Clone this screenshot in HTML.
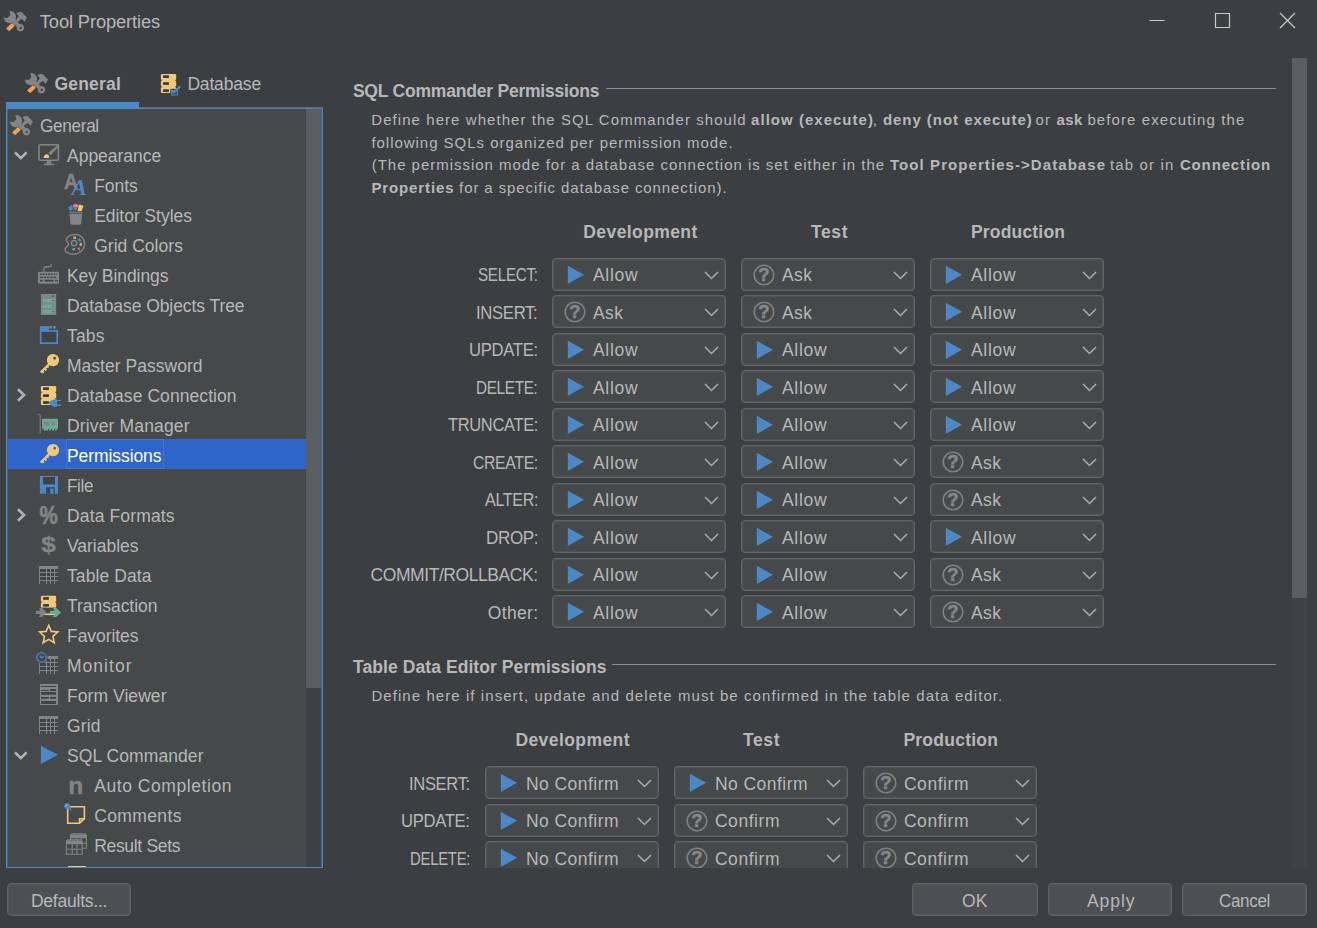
<!DOCTYPE html>
<html lang="en"><head><meta charset="utf-8"><title>Tool Properties</title>
<style>
*{box-sizing:border-box;margin:0;padding:0}
html,body{width:1317px;height:928px;overflow:hidden;background:#3c3f41}
body{position:relative;font-family:"Liberation Sans",sans-serif;color:#b8b8b8;font-size:17.5px}
.a{position:absolute;white-space:pre}
.t{line-height:30px;height:30px}
.b{font-weight:bold}
svg{position:absolute;overflow:visible}
#tree{position:absolute;left:6px;top:107px;width:317px;height:761px;background:#45494a;border:1px solid #4a88c7;border-top-color:#67696a;overflow:hidden}
.row{position:absolute;left:0;width:300px;height:30px}
.sel{position:absolute;left:1px;top:331px;width:298px;height:30px;background:#2f65ca}
.focus{position:absolute;left:59px;top:331px;width:98px;height:30px;border:1px solid #4672c8}
.cb{position:absolute;width:174px;height:33px;background:#45494a;border:1px solid #626567;border-radius:4px;box-shadow:inset 0 0 0 1px rgba(100,103,105,0.4)}
.x{line-height:31px}
.lbl{line-height:33px;height:33px}
.hd{font-weight:bold;line-height:24px}
.btn{position:absolute;height:33px;top:883px;background:#4c5052;border:1px solid #5f6163;border-radius:4px;box-shadow:inset 0 0 0 1px rgba(95,97,99,0.4)}
.bt{line-height:31px}
.sec{font-weight:bold;line-height:24px}
.ln{position:absolute;height:1px;background:#8b8d8e}
.d{font-size:15px;line-height:22px}
#view{position:absolute;left:340px;top:58px;width:952px;height:809.5px;overflow:hidden}
#view>div{position:absolute;left:-340px;top:-58px;width:1317px;height:928px}
</style></head>
<body>
<!-- title bar -->
<svg style="left:2.7px;top:9px" width="24" height="24" viewBox="0 0 24 24"><path d="M16.6 9.3L10.6 15.3" stroke="#828485" stroke-width="3" fill="none"/><path d="M8.8 14.9L10.9 16.8L6.2 21.3L4 19.4z" stroke="#f2a253" stroke-width="1.300" stroke-linejoin="round" fill="#f2a253"/><path d="M13.4 4.2L16.6 2.7L18.9 3.3L23.9 8.6L21.7 12.8L18.9 10L15.6 11.5L13.9 9.7L15.9 7.2z" fill="#828485"/><path d="M8.2 9.4L17.2 18.4" stroke="#828485" stroke-width="3.9" fill="none"/><path d="M17.4 14.9a3.8 3.8 0 1 0 0.01 0zM17.5 17.3a1.4 1.4 0 1 1 -0.01 0z" fill="#828485" fill-rule="evenodd"/><path d="M6.4 1.9A6.2 6.2 0 1 1 0.7 8.6L4.6 8.9L7.3 6.2z" fill="#828485"/></svg><div class="a " style="left:39.8px;top:7.5px;letter-spacing:-0.11px;line-height:28px;font-size:18.3px">Tool Properties</div>
<svg style="left:1146px;top:11px" width="160" height="20" viewBox="0 0 160 20"><path d="M3.5 9.5h15M69.5 2.5h14v14h-14zM134 2l15 15M149 2l-15 15" fill="none" stroke="#c8c9ca" stroke-width="1.2"/></svg>
<!-- tabs -->
<svg style="left:24.1px;top:70.6px" width="24" height="24" viewBox="0 0 24 24"><path d="M16.6 9.3L10.6 15.3" stroke="#828485" stroke-width="3" fill="none"/><path d="M8.8 14.9L10.9 16.8L6.2 21.3L4 19.4z" stroke="#f2a253" stroke-width="1.300" stroke-linejoin="round" fill="#f2a253"/><path d="M13.4 4.2L16.6 2.7L18.9 3.3L23.9 8.6L21.7 12.8L18.9 10L15.6 11.5L13.9 9.7L15.9 7.2z" fill="#828485"/><path d="M8.2 9.4L17.2 18.4" stroke="#828485" stroke-width="3.9" fill="none"/><path d="M17.4 14.9a3.8 3.8 0 1 0 0.01 0zM17.5 17.3a1.4 1.4 0 1 1 -0.01 0z" fill="#828485" fill-rule="evenodd"/><path d="M6.4 1.9A6.2 6.2 0 1 1 0.7 8.6L4.6 8.9L7.3 6.2z" fill="#828485"/></svg><div class="a b" style="left:54.5px;top:69.5px;letter-spacing:0.19px;line-height:28px">General</div><svg style="left:157px;top:70.8px" width="24" height="24" viewBox="0 0 24 24"><rect x="3.900" y="2.9" width="15.300" height="6.200" rx="1.300" fill="#f0c878"/><rect x="3.900" y="9.4" width="15.300" height="6.200" rx="1.300" fill="#f0c878"/><rect x="3.900" y="15.9" width="15.300" height="6.200" rx="1.300" fill="#f0c878"/><rect x="5" y="5.9" width="13.100" height="13.0" fill="#f0c878"/><rect x="6.100" y="4.3" width="5.800" height="2.700" fill="#343c49"/><rect x="6.100" y="11.2" width="5.800" height="2.700" fill="#343c49"/><rect x="6.100" y="18.3" width="5.800" height="2.700" fill="#343c49"/><rect x="13.200" y="17.800" width="8.600" height="7.200" fill="#3c3f41"/><rect x="14.600" y="19.800" width="6" height="4.200" fill="none" stroke="#4a88c7" stroke-width="1.100"/><path d="M14 18.700l2.900 2.700l6.300-6" fill="none" stroke="#4a88c7" stroke-width="2.200"/></svg><div class="a " style="left:187.4px;top:69.5px;letter-spacing:-0.17px;line-height:28px">Database</div>
<div class="a" style="left:6px;top:102px;width:133px;height:7px;background:#4a88c7;z-index:3"></div>
<!-- tree -->
<div id="tree">
<div class="sel"></div><div class="focus"></div>
<div class="row" style="top:2px"><svg style="left:2px;top:3px" width="24" height="24" viewBox="0 0 24 24"><path d="M16.6 9.3L10.6 15.3" stroke="#828485" stroke-width="3" fill="none"/><path d="M8.8 14.9L10.9 16.8L6.2 21.3L4 19.4z" stroke="#f2a253" stroke-width="1.300" stroke-linejoin="round" fill="#f2a253"/><path d="M13.4 4.2L16.6 2.7L18.9 3.3L23.9 8.6L21.7 12.8L18.9 10L15.6 11.5L13.9 9.7L15.9 7.2z" fill="#828485"/><path d="M8.2 9.4L17.2 18.4" stroke="#828485" stroke-width="3.9" fill="none"/><path d="M17.4 14.9a3.8 3.8 0 1 0 0.01 0zM17.5 17.3a1.4 1.4 0 1 1 -0.01 0z" fill="#828485" fill-rule="evenodd"/><path d="M6.4 1.9A6.2 6.2 0 1 1 0.7 8.6L4.6 8.9L7.3 6.2z" fill="#828485"/></svg><div class="a t" style="left:32.8px;top:0.5px;letter-spacing:-0.35px;transform:scaleX(0.9840);transform-origin:0 0;">General</div></div>
<div class="row" style="top:32px"><svg style="left:0;top:0" width="30" height="30" viewBox="0 0 30 30"><path d="M8 12.3L13.8 18.2L19.6 12.3" fill="none" stroke="#b1b3b5" stroke-width="2.6"/></svg><svg style="left:30px;top:3px" width="24" height="24" viewBox="0 0 24 24"><rect x="2" y="1.7" width="19.4" height="15.5" rx="1.2" fill="none" stroke="#828485" stroke-width="1.6"/><path d="M9.6 18h4.6v2.7h2.8v1.5h-10.2v-1.5h2.8z" fill="#828485"/><path d="M21.5 1.2L22.5 2.2L14 12.3L11.3 10z" fill="#828485"/><path d="M6.6 14.9c0.2-2.6 2-3.9 3.6-3.7c1.5 0.4 2.2 2 1.9 3.7z" fill="#f0c878"/></svg><div class="a t" style="left:60.0px;top:0.5px;letter-spacing:-0.01px;">Appearance</div></div>
<div class="row" style="top:62px"><svg style="left:57px;top:3px" width="24" height="24" viewBox="0 0 24 24"><text x="0.1" y="15.8" font-family="Liberation Sans, sans-serif" font-weight="bold" font-size="22.6" textLength="14" lengthAdjust="spacingAndGlyphs" stroke="#828485" stroke-width="0.5" fill="#828485">A</text><text x="7.4" y="22.2" font-family="Liberation Serif, serif" font-style="italic" font-weight="bold" font-size="23" fill="#4a88c7">A</text></svg><div class="a t" style="left:87.2px;top:0.5px;letter-spacing:-0.02px;">Fonts</div></div>
<div class="row" style="top:92px"><svg style="left:57px;top:3px" width="24" height="24" viewBox="0 0 24 24"><path d="M4.3 4.2L7.6 2L9.2 6.6L5.6 8z" fill="#4a88c7"/><path d="M8.8 3.2c0-3 5.8-3 5.8 0v1.4h-5.8z" fill="#e8799c"/><path d="M15.2 1.4L19.6 2.8L17.6 8H13.6z" fill="#f0c878"/><path d="M9.6 5h3.6L11.4 8z" fill="#828485"/><rect x="5.1" y="8.7" width="13.4" height="1.1" fill="#828485"/><path d="M5.4 10.7h12.8l-1 9.6q-0.15 1.4-1.6 1.4h-7.6q-1.45 0-1.6-1.4z" fill="#828485"/></svg><div class="a t" style="left:87.2px;top:0.5px;letter-spacing:-0.04px;">Editor Styles</div></div>
<div class="row" style="top:122px"><svg style="left:57px;top:3px" width="24" height="24" viewBox="0 0 24 24"><path d="M11.6 1.6c5.4 0 9 3.8 9 9.2c0 6-5.200 10.400-11.400 10.400c-4.400 0-8.200-1.900-8.200-4.700c0-2.600 3.400-2.400 3.400-5.300c0-1.800-2.200-2.100-2.200-4.400c0-2.900 4.200-5.200 9.400-5.200z" fill="none" stroke="#828485" stroke-width="1.5"/><circle cx="10.1" cy="10.1" r="2.7" fill="none" stroke="#828485" stroke-width="1.5"/><rect x="9.200" y="3.500" width="2.900" height="2.400" fill="#f2a253"/><path d="M13.4 6.600l2.200-1.600l1.600 2.600l-1.200 1.800z" fill="#4a88c7"/><path d="M15 11.200l2.600-1.800v4z" fill="#f0c878"/><path d="M13.400 15.200l2.200-1.200v4z" fill="#e8799c"/><path d="M7.600 16l3.800-1.600l-1.400 4.200l-1-1.400z" fill="#6aab93"/></svg><div class="a t" style="left:87.2px;top:0.5px;letter-spacing:0.02px;">Grid Colors</div></div>
<div class="row" style="top:152px"><svg style="left:30px;top:3px" width="24" height="24" viewBox="0 0 24 24"><path d="M14.200 1v1.400c0 2.200-7.400 0.400-7.400 3v3.200" fill="none" stroke="#828485" stroke-width="1.300"/><rect x="0.900" y="8.800" width="21.100" height="11.900" rx="1.400" fill="#828485"/><path d="M3 11.300h17" stroke="#3f4345" stroke-width="1.500" stroke-dasharray="1.7 1"/><path d="M3 14.300h17" stroke="#3f4345" stroke-width="1.300" stroke-dasharray="2.600 0.800"/><path d="M3 17.600h2.800M7.300 17.600h9.200M18 17.600h2.800" stroke="#3f4345" stroke-width="1.600"/></svg><div class="a t" style="left:60.0px;top:0.5px;letter-spacing:-0.06px;">Key Bindings</div></div>
<div class="row" style="top:182px"><svg style="left:30px;top:3px" width="24" height="24" viewBox="0 0 24 24"><rect x="3.900" y="0.900" width="15.300" height="21.100" fill="#828485"/><rect x="5.800" y="5.900" width="11.500" height="3.500" fill="#6aab93"/><rect x="5.800" y="11.600" width="11.500" height="3.400" fill="#6aab93"/><rect x="5.800" y="17" width="11.500" height="3.300" fill="#6aab93"/><path d="M15 3.200h2M15.400 7.600h1.400M15.400 13.300h1.400M15.400 18.700h1.400" stroke="#3f4345" stroke-width="1"/></svg><div class="a t" style="left:60.0px;top:0.5px;letter-spacing:-0.07px;">Database Objects Tree</div></div>
<div class="row" style="top:212px"><svg style="left:30px;top:3px" width="24" height="24" viewBox="0 0 24 24"><rect x="3.700" y="7.900" width="16.500" height="12.300" fill="#3f4345" stroke="#4a88c7" stroke-width="1.700"/><rect x="2.900" y="3.100" width="9.100" height="5.400" fill="#4a88c7"/><rect x="12.300" y="3.100" width="2.500" height="2.500" fill="#828485"/><rect x="16" y="3.100" width="2.800" height="2.500" fill="#828485"/></svg><div class="a t" style="left:60.0px;top:0.5px;letter-spacing:0.18px;">Tabs</div></div>
<div class="row" style="top:242px"><svg style="left:30px;top:3px" width="24" height="24" viewBox="0 0 24 24"><path d="M12.600 10.400L3.600 19.400M5 18l1.800 1.800M7.600 15.400l1.800 1.800M10 13l1.600 1.600" stroke="#f0c878" stroke-width="2.100" fill="none"/><path d="M16 1a6.100 6.100 0 1 0 0.010 0zM17.600 3.800a1.400 1.400 0 1 1 -0.010 0z" fill="#f0c878" fill-rule="evenodd"/></svg><div class="a t" style="left:60.0px;top:0.5px;letter-spacing:0.02px;">Master Password</div></div>
<div class="row" style="top:272px"><svg style="left:0;top:0" width="30" height="30" viewBox="0 0 30 30"><path d="M10.9 9.3L17 15.05L10.9 20.8" fill="none" stroke="#b1b3b5" stroke-width="2.6"/></svg><svg style="left:30px;top:3px" width="24" height="24" viewBox="0 0 24 24"><rect x="3.900" y="2.9" width="15.300" height="6.200" rx="1.300" fill="#f0c878"/><rect x="3.900" y="9.4" width="15.300" height="6.200" rx="1.300" fill="#f0c878"/><rect x="3.900" y="15.9" width="15.300" height="6.200" rx="1.300" fill="#f0c878"/><rect x="5" y="5.9" width="13.100" height="13.0" fill="#f0c878"/><rect x="6.100" y="4.3" width="5.800" height="2.700" fill="#343c49"/><rect x="6.100" y="11.3" width="5.800" height="2.700" fill="#343c49"/><rect x="6.100" y="18.2" width="5.800" height="2.700" fill="#343c49"/><path d="M12 19.300L15.500 16.800L18 16.200H20.100V16.900H24.100V18.100H20.100V21.400H24.100V22.900H20.100V24.100H18L15.500 23.200L12 20.500z" fill="#4a88c7"/></svg><div class="a t" style="left:60.0px;top:0.5px;letter-spacing:0.07px;">Database Connection</div></div>
<div class="row" style="top:302px"><svg style="left:30px;top:3px" width="24" height="24" viewBox="0 0 24 24"><path d="M1.200 1.600h1.300q0.700 0 0.700 0.700v18.200" fill="none" stroke="#828485" stroke-width="1"/><path d="M5.100 5.800h15.900v10h-1.200v1.700h-1.700v-1.700h-1v1.700h-2v-1.700h-1v1.700h-2v-1.700h-1v1.700h-4.500v-1.700h-1.500z" fill="#6aab93"/><rect x="7.100" y="8.600" width="5" height="4.500" fill="#828485"/><rect x="14.500" y="8.600" width="3.500" height="3.800" fill="#828485"/></svg><div class="a t" style="left:60.0px;top:0.5px;letter-spacing:0.15px;">Driver Manager</div></div>
<div class="row" style="top:332px"><svg style="left:30px;top:3px" width="24" height="24" viewBox="0 0 24 24"><path d="M12.600 10.400L3.600 19.400M5 18l1.800 1.800M7.600 15.400l1.800 1.800M10 13l1.600 1.600" stroke="#f0c878" stroke-width="2.100" fill="none"/><path d="M16 1a6.100 6.100 0 1 0 0.010 0zM17.600 3.800a1.400 1.400 0 1 1 -0.010 0z" fill="#f0c878" fill-rule="evenodd"/></svg><div class="a t" style="left:60.0px;top:0.5px;letter-spacing:-0.08px;color:#ffffff">Permissions</div></div>
<div class="row" style="top:362px"><svg style="left:30px;top:3px" width="24" height="24" viewBox="0 0 24 24"><path d="M2.900 2.900h18.100v17.900h-18.100z" fill="#4a88c7"/><rect x="6.100" y="2.900" width="11.900" height="8.500" fill="#3f4345"/><rect x="6.100" y="3" width="11" height="0.900" fill="#828485"/><path d="M9.100 14.300h8.600v6.500h-1.200v-5.200h-3.400v5.200h-4z" fill="#3f4345"/></svg><div class="a t" style="left:60.0px;top:0.5px;letter-spacing:-0.35px;transform:scaleX(0.9759);transform-origin:0 0;">File</div></div>
<div class="row" style="top:392px"><svg style="left:0;top:0" width="30" height="30" viewBox="0 0 30 30"><path d="M10.9 9.3L17 15.05L10.9 20.8" fill="none" stroke="#b1b3b5" stroke-width="2.6"/></svg><svg style="left:30px;top:3px" width="24" height="24" viewBox="0 0 24 24"><text x="2.500" y="21" font-family="Liberation Sans, sans-serif" font-weight="bold" font-size="25" textLength="18.200" lengthAdjust="spacingAndGlyphs" stroke="#828485" stroke-width="0.7" fill="#828485">%</text></svg><div class="a t" style="left:60.0px;top:0.5px;letter-spacing:0.14px;">Data Formats</div></div>
<div class="row" style="top:422px"><svg style="left:30px;top:3px" width="24" height="24" viewBox="0 0 24 24"><text x="4.200" y="18.800" font-family="Liberation Sans, sans-serif" font-weight="bold" font-size="22.500" textLength="14.600" lengthAdjust="spacingAndGlyphs" stroke="#828485" stroke-width="0.4" fill="#828485">$</text></svg><div class="a t" style="left:60.0px;top:0.5px;letter-spacing:-0.02px;">Variables</div></div>
<div class="row" style="top:452px"><svg style="left:30px;top:3px" width="24" height="24" viewBox="0 0 24 24"><rect x="2.500" y="6" width="18.500" height="12" fill="#3f4345"/><rect x="1.900" y="3" width="19.200" height="3" fill="#828485"/><path d="M2.500 5v16M9.500 5v16M13.500 5v16M17.500 5v16M2 9.500h19.100M2 13.500h19.100M2 17.500h19.100" stroke="#828485" stroke-width="1"/></svg><div class="a t" style="left:60.0px;top:0.5px;letter-spacing:0.09px;">Table Data</div></div>
<div class="row" style="top:482px"><svg style="left:30px;top:3px" width="24" height="24" viewBox="0 0 24 24"><rect x="3.900" y="2.7" width="15.300" height="6.200" rx="1.300" fill="#f0c878"/><rect x="3.900" y="9.2" width="15.300" height="6.200" rx="1.300" fill="#f0c878"/><rect x="3.900" y="15.7" width="15.300" height="6.200" rx="1.300" fill="#f0c878"/><rect x="5" y="5.7" width="13.100" height="13.0" fill="#f0c878"/><rect x="6.100" y="4.1" width="5.800" height="2.700" fill="#343c49"/><rect x="6.100" y="11.0" width="5.800" height="2.700" fill="#343c49"/><rect x="-1.500" y="14.600" width="26" height="6" fill="#45494a"/><rect x="9.600" y="20.800" width="6" height="1.300" fill="#f0c878"/><path d="M-1.100 17.800h4.600l-1.600-2.900h3.200l4.400 4.500l-4.400 4.500h-3.200l1.600-2.900h-4.600z" fill="#828485"/><path d="M13 17.800h4.600l-1.600-2.900h3.200l4.800 4.500l-4.800 4.500h-3.200l1.600-2.900h-4.600z" fill="#6aab93"/></svg><div class="a t" style="left:60.0px;top:0.5px;letter-spacing:-0.03px;">Transaction</div></div>
<div class="row" style="top:512px"><svg style="left:30px;top:3px" width="24" height="24" viewBox="0 0 24 24"><path d="M11.7 2.4L14.3 8.4L20.8 9.0L15.9 13.4L17.3 19.8L11.7 16.4L6.1 19.8L7.5 13.4L2.6 9.0L9.1 8.4z" fill="none" stroke="#f0c878" stroke-width="1.600" stroke-linejoin="miter"/></svg><div class="a t" style="left:60.0px;top:0.5px;letter-spacing:-0.06px;">Favorites</div></div>
<div class="row" style="top:542px"><svg style="left:30px;top:3px" width="24" height="24" viewBox="0 0 24 24"><rect x="2.500" y="6" width="18.500" height="12" fill="#3f4345"/><rect x="1.900" y="3" width="19.200" height="3" fill="#828485"/><path d="M2.500 5v16M9.500 5v16M13.500 5v16M17.500 5v16M2 9.500h19.100M2 13.500h19.100M2 17.500h19.100" stroke="#828485" stroke-width="1"/><circle cx="4.400" cy="4.400" r="6.200" fill="#45494a"/><circle cx="4.400" cy="4.400" r="4.700" fill="none" stroke="#4a88c7" stroke-width="1.300"/><path d="M2.600 2.600l1.800 2.200l2.200-1.600" fill="none" stroke="#4a88c7" stroke-width="1.200"/></svg><div class="a t" style="left:60.0px;top:0.5px;letter-spacing:1.02px;">Monitor</div></div>
<div class="row" style="top:572px"><svg style="left:30px;top:3px" width="24" height="24" viewBox="0 0 24 24"><rect x="3" y="1" width="18.100" height="21" fill="#828485"/><path d="M4.100 3h14.900v1h-14.900zM4.100 7h7.800v1h-7.800zM13.100 6.100h5.900v1.900h-5.900zM4.100 9.100h14.900v2.700h-14.900zM4.100 14.100h7.800v1.700h-7.800zM13.100 14.100h5.900v1.700h-5.900zM4.100 18.100h14.900v2.800h-14.900z" fill="#3f4345"/></svg><div class="a t" style="left:60.0px;top:0.5px;letter-spacing:0.06px;">Form Viewer</div></div>
<div class="row" style="top:602px"><svg style="left:30px;top:3px" width="24" height="24" viewBox="0 0 24 24"><rect x="2.500" y="6" width="18.500" height="12" fill="#3f4345"/><rect x="1.900" y="3" width="19.200" height="3" fill="#828485"/><path d="M2.500 5v16M9.500 5v16M13.500 5v16M17.500 5v16M2 9.500h19.100M2 13.500h19.100M2 17.500h19.100" stroke="#828485" stroke-width="1"/></svg><div class="a t" style="left:60.0px;top:0.5px;letter-spacing:0.15px;">Grid</div></div>
<div class="row" style="top:632px"><svg style="left:0;top:0" width="30" height="30" viewBox="0 0 30 30"><path d="M8 12.3L13.8 18.2L19.6 12.3" fill="none" stroke="#b1b3b5" stroke-width="2.6"/></svg><svg style="left:30px;top:3px" width="24" height="24" viewBox="0 0 24 24"><path d="M3.900 2.700L21 11.800L3.900 21z" fill="#4a88c7"/></svg><div class="a t" style="left:60.0px;top:0.5px;letter-spacing:0.08px;">SQL Commander</div></div>
<div class="row" style="top:662px"><svg style="left:57px;top:3px" width="24" height="24" viewBox="0 0 24 24"><text x="4.300" y="21" font-family="Liberation Sans, sans-serif" font-weight="bold" font-size="24.600" stroke="#828485" stroke-width="0.3" fill="#828485">n</text></svg><div class="a t" style="left:87.2px;top:0.5px;letter-spacing:0.56px;">Auto Completion</div></div>
<div class="row" style="top:692px"><svg style="left:57px;top:3px" width="24" height="24" viewBox="0 0 24 24"><path d="M3.700 3.700h16.700v12l-4.800 4.500h-11.900zM20.400 15.700h-4.800v4.500" fill="none" stroke="#f0c878" stroke-width="1.600"/><circle cx="3.200" cy="3.200" r="3" fill="#4a88c7"/><path d="M4.500 4.500l2.600 2.600" stroke="#4a88c7" stroke-width="1.400"/><circle cx="2.400" cy="2.400" r="0.900" fill="#8fb8e6"/></svg><div class="a t" style="left:87.2px;top:0.5px;letter-spacing:0.38px;">Comments</div></div>
<div class="row" style="top:722px"><svg style="left:57px;top:3px" width="24" height="24" viewBox="0 0 24 24"><path d="M6.6 15.2v-12.300q0-2 2-2h11.800q2 0 2 2v12.300z" fill="#45494a" stroke="#828485" stroke-width="1.100"/><path d="M6.6 5.2v-1.800q0-2 2-2h11.800q2 0 2 2v1.800z" fill="#828485"/><path d="M12.4 5.2v10M17.1 5.2v10M6.1 10.2h15.800" stroke="#828485" stroke-width="1.100" fill="none"/><path d="M2.4 21.2v-12.300q0-2 2-2h11.800q2 0 2 2v12.300z" fill="#45494a" stroke="#828485" stroke-width="1.100"/><path d="M2.4 11.2v-1.800q0-2 2-2h11.800q2 0 2 2v1.800z" fill="#828485"/><path d="M8.2 11.2v10M12.9 11.2v10M1.9 16.2h15.800" stroke="#828485" stroke-width="1.100" fill="none"/></svg><div class="a t" style="left:87.2px;top:0.5px;letter-spacing:-0.32px;">Result Sets</div></div>
<div class="row" style="top:752px"><div class="a" style="left:61px;top:6px;width:18px;height:2px;background:#f0c878"></div></div>
<div class="a" style="left:299px;top:0;width:15px;height:760px;background:#3d4143"></div><div class="a" style="left:299px;top:0;width:15px;height:580px;background:#595e61"></div>
<div class="a" style="left:-1px;top:-1px;width:317px;height:761px;border:1px solid #4a88c7;border-top-color:#67696a;box-shadow:inset 0 1px 0 rgba(74,132,192,0.92),inset 1px 0 0 rgba(74,136,199,0.45),inset -1px 0 0 rgba(74,136,199,0.45)"></div>
</div>
<!-- content -->
<div id="view"><div>
<div class="a sec" style="left:352.9px;top:78.5px;letter-spacing:-0.21px;">SQL Commander Permissions</div><div class="ln" style="left:606px;top:88px;width:670px"></div>
<div class="a d " style="left:371.3px;top:109px;letter-spacing:1.06px;">Define here whether the SQL Commander should</div><div class="a d b" style="left:751.1px;top:109px;letter-spacing:1.02px;">allow (execute)</div><div class="a d " style="left:872.7px;top:109px;letter-spacing:-0.07px;">,</div><div class="a d b" style="left:882.9px;top:109px;letter-spacing:0.96px;">deny (not execute)</div><div class="a d " style="left:1035.4px;top:109px;letter-spacing:1.15px;">or</div><div class="a d b" style="left:1056.4px;top:109px;letter-spacing:0.43px;">ask</div><div class="a d " style="left:1087.4px;top:109px;letter-spacing:1.10px;">before executing the</div>
<div class="a d " style="left:371.4px;top:131.6px;letter-spacing:0.97px;">following SQLs organized per permission mode.</div>
<div class="a d " style="left:371.7px;top:154.2px;letter-spacing:0.98px;">(The permission mode for a database connection is set either in the</div><div class="a d b" style="left:890.0px;top:154.2px;letter-spacing:1.07px;">Tool Properties-&gt;Database</div><div class="a d " style="left:1110.0px;top:154.2px;letter-spacing:1.15px;">tab or in</div><div class="a d b" style="left:1179.9px;top:154.2px;letter-spacing:0.86px;">Connection</div>
<div class="a d b" style="left:371.4px;top:176.6px;letter-spacing:0.88px;">Properties</div><div class="a d " style="left:459.1px;top:176.6px;letter-spacing:0.90px;">for a specific database connection).</div>

<div class="a hd" style="left:583.3px;top:219.5px;letter-spacing:0.41px;">Development</div><div class="a hd" style="left:810.9px;top:219.5px;letter-spacing:0.67px;">Test</div><div class="a hd" style="left:970.9px;top:219.5px;letter-spacing:0.19px;">Production</div>
<div class="a lbl" style="left:478.1px;top:258.5px;letter-spacing:-0.35px;transform:scaleX(0.8708);transform-origin:0 0;">SELECT:</div><div class="cb" style="left:552px;top:258px"><svg style="left:15px;top:7px" width="18" height="19" viewBox="0 0 18 19"><path d="M-0.2 -0.2L16.1 8.85L-0.2 17.9z" fill="#4a88c7"/></svg><div class="a x" style="left:39.9px;top:0.5px;letter-spacing:0.74px;">Allow</div><svg style="left:150.5px;top:12px" width="15" height="9" viewBox="0 0 15 9"><path d="M1 1l6.5 6.5L14 1" fill="none" stroke="#a9acae" stroke-width="1.45"/></svg></div><div class="cb" style="left:741px;top:258px"><svg style="left:10.4px;top:4.4px" width="24" height="24" viewBox="0 0 24 24"><circle cx="12" cy="12" r="9.800" fill="none" stroke="#7e8183" stroke-width="1.600"/><text x="12" y="18.400" text-anchor="middle" font-family="Liberation Sans, sans-serif" font-weight="bold" font-size="18.500" stroke="#85888a" stroke-width="0.5" fill="#85888a">?</text></svg><div class="a x" style="left:39.9px;top:0.5px;letter-spacing:0.46px;">Ask</div><svg style="left:150.5px;top:12px" width="15" height="9" viewBox="0 0 15 9"><path d="M1 1l6.5 6.5L14 1" fill="none" stroke="#a9acae" stroke-width="1.45"/></svg></div><div class="cb" style="left:930px;top:258px"><svg style="left:15px;top:7px" width="18" height="19" viewBox="0 0 18 19"><path d="M-0.2 -0.2L16.1 8.85L-0.2 17.9z" fill="#4a88c7"/></svg><div class="a x" style="left:39.9px;top:0.5px;letter-spacing:0.74px;">Allow</div><svg style="left:150.5px;top:12px" width="15" height="9" viewBox="0 0 15 9"><path d="M1 1l6.5 6.5L14 1" fill="none" stroke="#a9acae" stroke-width="1.45"/></svg></div>
<div class="a lbl" style="left:476.4px;top:296.5px;letter-spacing:-0.35px;transform:scaleX(0.9539);transform-origin:0 0;">INSERT:</div><div class="cb" style="left:552px;top:295px"><svg style="left:10.4px;top:4.4px" width="24" height="24" viewBox="0 0 24 24"><circle cx="12" cy="12" r="9.800" fill="none" stroke="#7e8183" stroke-width="1.600"/><text x="12" y="18.400" text-anchor="middle" font-family="Liberation Sans, sans-serif" font-weight="bold" font-size="18.500" stroke="#85888a" stroke-width="0.5" fill="#85888a">?</text></svg><div class="a x" style="left:39.9px;top:1.5px;letter-spacing:0.46px;">Ask</div><svg style="left:150.5px;top:12px" width="15" height="9" viewBox="0 0 15 9"><path d="M1 1l6.5 6.5L14 1" fill="none" stroke="#a9acae" stroke-width="1.45"/></svg></div><div class="cb" style="left:741px;top:295px"><svg style="left:10.4px;top:4.4px" width="24" height="24" viewBox="0 0 24 24"><circle cx="12" cy="12" r="9.800" fill="none" stroke="#7e8183" stroke-width="1.600"/><text x="12" y="18.400" text-anchor="middle" font-family="Liberation Sans, sans-serif" font-weight="bold" font-size="18.500" stroke="#85888a" stroke-width="0.5" fill="#85888a">?</text></svg><div class="a x" style="left:39.9px;top:1.5px;letter-spacing:0.46px;">Ask</div><svg style="left:150.5px;top:12px" width="15" height="9" viewBox="0 0 15 9"><path d="M1 1l6.5 6.5L14 1" fill="none" stroke="#a9acae" stroke-width="1.45"/></svg></div><div class="cb" style="left:930px;top:295px"><svg style="left:15px;top:7px" width="18" height="19" viewBox="0 0 18 19"><path d="M-0.2 -0.2L16.1 8.85L-0.2 17.9z" fill="#4a88c7"/></svg><div class="a x" style="left:39.9px;top:1.5px;letter-spacing:0.74px;">Allow</div><svg style="left:150.5px;top:12px" width="15" height="9" viewBox="0 0 15 9"><path d="M1 1l6.5 6.5L14 1" fill="none" stroke="#a9acae" stroke-width="1.45"/></svg></div>
<div class="a lbl" style="left:469.0px;top:333.5px;letter-spacing:-0.35px;transform:scaleX(0.9538);transform-origin:0 0;">UPDATE:</div><div class="cb" style="left:552px;top:333px"><svg style="left:15px;top:7px" width="18" height="19" viewBox="0 0 18 19"><path d="M-0.2 -0.2L16.1 8.85L-0.2 17.9z" fill="#4a88c7"/></svg><div class="a x" style="left:39.9px;top:0.5px;letter-spacing:0.74px;">Allow</div><svg style="left:150.5px;top:12px" width="15" height="9" viewBox="0 0 15 9"><path d="M1 1l6.5 6.5L14 1" fill="none" stroke="#a9acae" stroke-width="1.45"/></svg></div><div class="cb" style="left:741px;top:333px"><svg style="left:15px;top:7px" width="18" height="19" viewBox="0 0 18 19"><path d="M-0.2 -0.2L16.1 8.85L-0.2 17.9z" fill="#4a88c7"/></svg><div class="a x" style="left:39.9px;top:0.5px;letter-spacing:0.74px;">Allow</div><svg style="left:150.5px;top:12px" width="15" height="9" viewBox="0 0 15 9"><path d="M1 1l6.5 6.5L14 1" fill="none" stroke="#a9acae" stroke-width="1.45"/></svg></div><div class="cb" style="left:930px;top:333px"><svg style="left:15px;top:7px" width="18" height="19" viewBox="0 0 18 19"><path d="M-0.2 -0.2L16.1 8.85L-0.2 17.9z" fill="#4a88c7"/></svg><div class="a x" style="left:39.9px;top:0.5px;letter-spacing:0.74px;">Allow</div><svg style="left:150.5px;top:12px" width="15" height="9" viewBox="0 0 15 9"><path d="M1 1l6.5 6.5L14 1" fill="none" stroke="#a9acae" stroke-width="1.45"/></svg></div>
<div class="a lbl" style="left:476.3px;top:371.5px;letter-spacing:-0.35px;transform:scaleX(0.8722);transform-origin:0 0;">DELETE:</div><div class="cb" style="left:552px;top:370px"><svg style="left:15px;top:7px" width="18" height="19" viewBox="0 0 18 19"><path d="M-0.2 -0.2L16.1 8.85L-0.2 17.9z" fill="#4a88c7"/></svg><div class="a x" style="left:39.9px;top:1.5px;letter-spacing:0.74px;">Allow</div><svg style="left:150.5px;top:12px" width="15" height="9" viewBox="0 0 15 9"><path d="M1 1l6.5 6.5L14 1" fill="none" stroke="#a9acae" stroke-width="1.45"/></svg></div><div class="cb" style="left:741px;top:370px"><svg style="left:15px;top:7px" width="18" height="19" viewBox="0 0 18 19"><path d="M-0.2 -0.2L16.1 8.85L-0.2 17.9z" fill="#4a88c7"/></svg><div class="a x" style="left:39.9px;top:1.5px;letter-spacing:0.74px;">Allow</div><svg style="left:150.5px;top:12px" width="15" height="9" viewBox="0 0 15 9"><path d="M1 1l6.5 6.5L14 1" fill="none" stroke="#a9acae" stroke-width="1.45"/></svg></div><div class="cb" style="left:930px;top:370px"><svg style="left:15px;top:7px" width="18" height="19" viewBox="0 0 18 19"><path d="M-0.2 -0.2L16.1 8.85L-0.2 17.9z" fill="#4a88c7"/></svg><div class="a x" style="left:39.9px;top:1.5px;letter-spacing:0.74px;">Allow</div><svg style="left:150.5px;top:12px" width="15" height="9" viewBox="0 0 15 9"><path d="M1 1l6.5 6.5L14 1" fill="none" stroke="#a9acae" stroke-width="1.45"/></svg></div>
<div class="a lbl" style="left:447.7px;top:408.5px;letter-spacing:-0.35px;transform:scaleX(0.9412);transform-origin:0 0;">TRUNCATE:</div><div class="cb" style="left:552px;top:408px"><svg style="left:15px;top:7px" width="18" height="19" viewBox="0 0 18 19"><path d="M-0.2 -0.2L16.1 8.85L-0.2 17.9z" fill="#4a88c7"/></svg><div class="a x" style="left:39.9px;top:0.5px;letter-spacing:0.74px;">Allow</div><svg style="left:150.5px;top:12px" width="15" height="9" viewBox="0 0 15 9"><path d="M1 1l6.5 6.5L14 1" fill="none" stroke="#a9acae" stroke-width="1.45"/></svg></div><div class="cb" style="left:741px;top:408px"><svg style="left:15px;top:7px" width="18" height="19" viewBox="0 0 18 19"><path d="M-0.2 -0.2L16.1 8.85L-0.2 17.9z" fill="#4a88c7"/></svg><div class="a x" style="left:39.9px;top:0.5px;letter-spacing:0.74px;">Allow</div><svg style="left:150.5px;top:12px" width="15" height="9" viewBox="0 0 15 9"><path d="M1 1l6.5 6.5L14 1" fill="none" stroke="#a9acae" stroke-width="1.45"/></svg></div><div class="cb" style="left:930px;top:408px"><svg style="left:15px;top:7px" width="18" height="19" viewBox="0 0 18 19"><path d="M-0.2 -0.2L16.1 8.85L-0.2 17.9z" fill="#4a88c7"/></svg><div class="a x" style="left:39.9px;top:0.5px;letter-spacing:0.74px;">Allow</div><svg style="left:150.5px;top:12px" width="15" height="9" viewBox="0 0 15 9"><path d="M1 1l6.5 6.5L14 1" fill="none" stroke="#a9acae" stroke-width="1.45"/></svg></div>
<div class="a lbl" style="left:472.9px;top:446.5px;letter-spacing:-0.35px;transform:scaleX(0.9000);transform-origin:0 0;">CREATE:</div><div class="cb" style="left:552px;top:445px"><svg style="left:15px;top:7px" width="18" height="19" viewBox="0 0 18 19"><path d="M-0.2 -0.2L16.1 8.85L-0.2 17.9z" fill="#4a88c7"/></svg><div class="a x" style="left:39.9px;top:1.5px;letter-spacing:0.74px;">Allow</div><svg style="left:150.5px;top:12px" width="15" height="9" viewBox="0 0 15 9"><path d="M1 1l6.5 6.5L14 1" fill="none" stroke="#a9acae" stroke-width="1.45"/></svg></div><div class="cb" style="left:741px;top:445px"><svg style="left:15px;top:7px" width="18" height="19" viewBox="0 0 18 19"><path d="M-0.2 -0.2L16.1 8.85L-0.2 17.9z" fill="#4a88c7"/></svg><div class="a x" style="left:39.9px;top:1.5px;letter-spacing:0.74px;">Allow</div><svg style="left:150.5px;top:12px" width="15" height="9" viewBox="0 0 15 9"><path d="M1 1l6.5 6.5L14 1" fill="none" stroke="#a9acae" stroke-width="1.45"/></svg></div><div class="cb" style="left:930px;top:445px"><svg style="left:10.4px;top:4.4px" width="24" height="24" viewBox="0 0 24 24"><circle cx="12" cy="12" r="9.800" fill="none" stroke="#7e8183" stroke-width="1.600"/><text x="12" y="18.400" text-anchor="middle" font-family="Liberation Sans, sans-serif" font-weight="bold" font-size="18.500" stroke="#85888a" stroke-width="0.5" fill="#85888a">?</text></svg><div class="a x" style="left:39.9px;top:1.5px;letter-spacing:0.46px;">Ask</div><svg style="left:150.5px;top:12px" width="15" height="9" viewBox="0 0 15 9"><path d="M1 1l6.5 6.5L14 1" fill="none" stroke="#a9acae" stroke-width="1.45"/></svg></div>
<div class="a lbl" style="left:484.7px;top:483.5px;letter-spacing:-0.35px;transform:scaleX(0.9172);transform-origin:0 0;">ALTER:</div><div class="cb" style="left:552px;top:483px"><svg style="left:15px;top:7px" width="18" height="19" viewBox="0 0 18 19"><path d="M-0.2 -0.2L16.1 8.85L-0.2 17.9z" fill="#4a88c7"/></svg><div class="a x" style="left:39.9px;top:0.5px;letter-spacing:0.74px;">Allow</div><svg style="left:150.5px;top:12px" width="15" height="9" viewBox="0 0 15 9"><path d="M1 1l6.5 6.5L14 1" fill="none" stroke="#a9acae" stroke-width="1.45"/></svg></div><div class="cb" style="left:741px;top:483px"><svg style="left:15px;top:7px" width="18" height="19" viewBox="0 0 18 19"><path d="M-0.2 -0.2L16.1 8.85L-0.2 17.9z" fill="#4a88c7"/></svg><div class="a x" style="left:39.9px;top:0.5px;letter-spacing:0.74px;">Allow</div><svg style="left:150.5px;top:12px" width="15" height="9" viewBox="0 0 15 9"><path d="M1 1l6.5 6.5L14 1" fill="none" stroke="#a9acae" stroke-width="1.45"/></svg></div><div class="cb" style="left:930px;top:483px"><svg style="left:10.4px;top:4.4px" width="24" height="24" viewBox="0 0 24 24"><circle cx="12" cy="12" r="9.800" fill="none" stroke="#7e8183" stroke-width="1.600"/><text x="12" y="18.400" text-anchor="middle" font-family="Liberation Sans, sans-serif" font-weight="bold" font-size="18.500" stroke="#85888a" stroke-width="0.5" fill="#85888a">?</text></svg><div class="a x" style="left:39.9px;top:0.5px;letter-spacing:0.46px;">Ask</div><svg style="left:150.5px;top:12px" width="15" height="9" viewBox="0 0 15 9"><path d="M1 1l6.5 6.5L14 1" fill="none" stroke="#a9acae" stroke-width="1.45"/></svg></div>
<div class="a lbl" style="left:485.5px;top:521.5px;letter-spacing:-0.35px;transform:scaleX(0.9734);transform-origin:0 0;">DROP:</div><div class="cb" style="left:552px;top:520px"><svg style="left:15px;top:7px" width="18" height="19" viewBox="0 0 18 19"><path d="M-0.2 -0.2L16.1 8.85L-0.2 17.9z" fill="#4a88c7"/></svg><div class="a x" style="left:39.9px;top:1.5px;letter-spacing:0.74px;">Allow</div><svg style="left:150.5px;top:12px" width="15" height="9" viewBox="0 0 15 9"><path d="M1 1l6.5 6.5L14 1" fill="none" stroke="#a9acae" stroke-width="1.45"/></svg></div><div class="cb" style="left:741px;top:520px"><svg style="left:15px;top:7px" width="18" height="19" viewBox="0 0 18 19"><path d="M-0.2 -0.2L16.1 8.85L-0.2 17.9z" fill="#4a88c7"/></svg><div class="a x" style="left:39.9px;top:1.5px;letter-spacing:0.74px;">Allow</div><svg style="left:150.5px;top:12px" width="15" height="9" viewBox="0 0 15 9"><path d="M1 1l6.5 6.5L14 1" fill="none" stroke="#a9acae" stroke-width="1.45"/></svg></div><div class="cb" style="left:930px;top:520px"><svg style="left:15px;top:7px" width="18" height="19" viewBox="0 0 18 19"><path d="M-0.2 -0.2L16.1 8.85L-0.2 17.9z" fill="#4a88c7"/></svg><div class="a x" style="left:39.9px;top:1.5px;letter-spacing:0.74px;">Allow</div><svg style="left:150.5px;top:12px" width="15" height="9" viewBox="0 0 15 9"><path d="M1 1l6.5 6.5L14 1" fill="none" stroke="#a9acae" stroke-width="1.45"/></svg></div>
<div class="a lbl" style="left:370.6px;top:558.5px;letter-spacing:-0.44px;">COMMIT/ROLLBACK:</div><div class="cb" style="left:552px;top:558px"><svg style="left:15px;top:7px" width="18" height="19" viewBox="0 0 18 19"><path d="M-0.2 -0.2L16.1 8.85L-0.2 17.9z" fill="#4a88c7"/></svg><div class="a x" style="left:39.9px;top:0.5px;letter-spacing:0.74px;">Allow</div><svg style="left:150.5px;top:12px" width="15" height="9" viewBox="0 0 15 9"><path d="M1 1l6.5 6.5L14 1" fill="none" stroke="#a9acae" stroke-width="1.45"/></svg></div><div class="cb" style="left:741px;top:558px"><svg style="left:15px;top:7px" width="18" height="19" viewBox="0 0 18 19"><path d="M-0.2 -0.2L16.1 8.85L-0.2 17.9z" fill="#4a88c7"/></svg><div class="a x" style="left:39.9px;top:0.5px;letter-spacing:0.74px;">Allow</div><svg style="left:150.5px;top:12px" width="15" height="9" viewBox="0 0 15 9"><path d="M1 1l6.5 6.5L14 1" fill="none" stroke="#a9acae" stroke-width="1.45"/></svg></div><div class="cb" style="left:930px;top:558px"><svg style="left:10.4px;top:4.4px" width="24" height="24" viewBox="0 0 24 24"><circle cx="12" cy="12" r="9.800" fill="none" stroke="#7e8183" stroke-width="1.600"/><text x="12" y="18.400" text-anchor="middle" font-family="Liberation Sans, sans-serif" font-weight="bold" font-size="18.500" stroke="#85888a" stroke-width="0.5" fill="#85888a">?</text></svg><div class="a x" style="left:39.9px;top:0.5px;letter-spacing:0.46px;">Ask</div><svg style="left:150.5px;top:12px" width="15" height="9" viewBox="0 0 15 9"><path d="M1 1l6.5 6.5L14 1" fill="none" stroke="#a9acae" stroke-width="1.45"/></svg></div>
<div class="a lbl" style="left:487.8px;top:596.5px;letter-spacing:0.33px;">Other:</div><div class="cb" style="left:552px;top:595px"><svg style="left:15px;top:7px" width="18" height="19" viewBox="0 0 18 19"><path d="M-0.2 -0.2L16.1 8.85L-0.2 17.9z" fill="#4a88c7"/></svg><div class="a x" style="left:39.9px;top:1.5px;letter-spacing:0.74px;">Allow</div><svg style="left:150.5px;top:12px" width="15" height="9" viewBox="0 0 15 9"><path d="M1 1l6.5 6.5L14 1" fill="none" stroke="#a9acae" stroke-width="1.45"/></svg></div><div class="cb" style="left:741px;top:595px"><svg style="left:15px;top:7px" width="18" height="19" viewBox="0 0 18 19"><path d="M-0.2 -0.2L16.1 8.85L-0.2 17.9z" fill="#4a88c7"/></svg><div class="a x" style="left:39.9px;top:1.5px;letter-spacing:0.74px;">Allow</div><svg style="left:150.5px;top:12px" width="15" height="9" viewBox="0 0 15 9"><path d="M1 1l6.5 6.5L14 1" fill="none" stroke="#a9acae" stroke-width="1.45"/></svg></div><div class="cb" style="left:930px;top:595px"><svg style="left:10.4px;top:4.4px" width="24" height="24" viewBox="0 0 24 24"><circle cx="12" cy="12" r="9.800" fill="none" stroke="#7e8183" stroke-width="1.600"/><text x="12" y="18.400" text-anchor="middle" font-family="Liberation Sans, sans-serif" font-weight="bold" font-size="18.500" stroke="#85888a" stroke-width="0.5" fill="#85888a">?</text></svg><div class="a x" style="left:39.9px;top:1.5px;letter-spacing:0.46px;">Ask</div><svg style="left:150.5px;top:12px" width="15" height="9" viewBox="0 0 15 9"><path d="M1 1l6.5 6.5L14 1" fill="none" stroke="#a9acae" stroke-width="1.45"/></svg></div>
<div class="a sec" style="left:353.1px;top:655px;letter-spacing:0.07px;">Table Data Editor Permissions</div><div class="ln" style="left:612px;top:664px;width:664px"></div>
<div class="a d" style="left:371.4px;top:684.8px;letter-spacing:1.07px;">Define here if insert, update and delete must be confirmed in the table data editor.</div>
<div class="a hd" style="left:515.4px;top:727.5px;letter-spacing:0.42px;">Development</div><div class="a hd" style="left:742.9px;top:727.5px;letter-spacing:0.64px;">Test</div><div class="a hd" style="left:903.4px;top:727.5px;letter-spacing:0.25px;">Production</div>
<div class="a lbl" style="left:408.9px;top:767.5px;letter-spacing:-0.35px;transform:scaleX(0.9462);transform-origin:0 0;">INSERT:</div><div class="cb" style="left:485px;top:766px"><svg style="left:15px;top:7px" width="18" height="19" viewBox="0 0 18 19"><path d="M-0.2 -0.2L16.1 8.85L-0.2 17.9z" fill="#4a88c7"/></svg><div class="a x" style="left:39.9px;top:1.5px;letter-spacing:0.46px;">No Confirm</div><svg style="left:150.5px;top:12px" width="15" height="9" viewBox="0 0 15 9"><path d="M1 1l6.5 6.5L14 1" fill="none" stroke="#a9acae" stroke-width="1.45"/></svg></div><div class="cb" style="left:674px;top:766px"><svg style="left:15px;top:7px" width="18" height="19" viewBox="0 0 18 19"><path d="M-0.2 -0.2L16.1 8.85L-0.2 17.9z" fill="#4a88c7"/></svg><div class="a x" style="left:39.9px;top:1.5px;letter-spacing:0.46px;">No Confirm</div><svg style="left:150.5px;top:12px" width="15" height="9" viewBox="0 0 15 9"><path d="M1 1l6.5 6.5L14 1" fill="none" stroke="#a9acae" stroke-width="1.45"/></svg></div><div class="cb" style="left:863px;top:766px"><svg style="left:10.4px;top:4.4px" width="24" height="24" viewBox="0 0 24 24"><circle cx="12" cy="12" r="9.800" fill="none" stroke="#7e8183" stroke-width="1.600"/><text x="12" y="18.400" text-anchor="middle" font-family="Liberation Sans, sans-serif" font-weight="bold" font-size="18.500" stroke="#85888a" stroke-width="0.5" fill="#85888a">?</text></svg><div class="a x" style="left:39.9px;top:1.5px;letter-spacing:0.56px;">Confirm</div><svg style="left:150.5px;top:12px" width="15" height="9" viewBox="0 0 15 9"><path d="M1 1l6.5 6.5L14 1" fill="none" stroke="#a9acae" stroke-width="1.45"/></svg></div>
<div class="a lbl" style="left:401.2px;top:804.5px;letter-spacing:-0.35px;transform:scaleX(0.9510);transform-origin:0 0;">UPDATE:</div><div class="cb" style="left:485px;top:804px"><svg style="left:15px;top:7px" width="18" height="19" viewBox="0 0 18 19"><path d="M-0.2 -0.2L16.1 8.85L-0.2 17.9z" fill="#4a88c7"/></svg><div class="a x" style="left:39.9px;top:0.5px;letter-spacing:0.46px;">No Confirm</div><svg style="left:150.5px;top:12px" width="15" height="9" viewBox="0 0 15 9"><path d="M1 1l6.5 6.5L14 1" fill="none" stroke="#a9acae" stroke-width="1.45"/></svg></div><div class="cb" style="left:674px;top:804px"><svg style="left:10.4px;top:4.4px" width="24" height="24" viewBox="0 0 24 24"><circle cx="12" cy="12" r="9.800" fill="none" stroke="#7e8183" stroke-width="1.600"/><text x="12" y="18.400" text-anchor="middle" font-family="Liberation Sans, sans-serif" font-weight="bold" font-size="18.500" stroke="#85888a" stroke-width="0.5" fill="#85888a">?</text></svg><div class="a x" style="left:39.9px;top:0.5px;letter-spacing:0.56px;">Confirm</div><svg style="left:150.5px;top:12px" width="15" height="9" viewBox="0 0 15 9"><path d="M1 1l6.5 6.5L14 1" fill="none" stroke="#a9acae" stroke-width="1.45"/></svg></div><div class="cb" style="left:863px;top:804px"><svg style="left:10.4px;top:4.4px" width="24" height="24" viewBox="0 0 24 24"><circle cx="12" cy="12" r="9.800" fill="none" stroke="#7e8183" stroke-width="1.600"/><text x="12" y="18.400" text-anchor="middle" font-family="Liberation Sans, sans-serif" font-weight="bold" font-size="18.500" stroke="#85888a" stroke-width="0.5" fill="#85888a">?</text></svg><div class="a x" style="left:39.9px;top:0.5px;letter-spacing:0.56px;">Confirm</div><svg style="left:150.5px;top:12px" width="15" height="9" viewBox="0 0 15 9"><path d="M1 1l6.5 6.5L14 1" fill="none" stroke="#a9acae" stroke-width="1.45"/></svg></div>
<div class="a lbl" style="left:409.6px;top:842.5px;letter-spacing:-0.35px;transform:scaleX(0.8539);transform-origin:0 0;">DELETE:</div><div class="cb" style="left:485px;top:841px"><svg style="left:15px;top:7px" width="18" height="19" viewBox="0 0 18 19"><path d="M-0.2 -0.2L16.1 8.85L-0.2 17.9z" fill="#4a88c7"/></svg><div class="a x" style="left:39.9px;top:1.5px;letter-spacing:0.46px;">No Confirm</div><svg style="left:150.5px;top:12px" width="15" height="9" viewBox="0 0 15 9"><path d="M1 1l6.5 6.5L14 1" fill="none" stroke="#a9acae" stroke-width="1.45"/></svg></div><div class="cb" style="left:674px;top:841px"><svg style="left:10.4px;top:4.4px" width="24" height="24" viewBox="0 0 24 24"><circle cx="12" cy="12" r="9.800" fill="none" stroke="#7e8183" stroke-width="1.600"/><text x="12" y="18.400" text-anchor="middle" font-family="Liberation Sans, sans-serif" font-weight="bold" font-size="18.500" stroke="#85888a" stroke-width="0.5" fill="#85888a">?</text></svg><div class="a x" style="left:39.9px;top:1.5px;letter-spacing:0.56px;">Confirm</div><svg style="left:150.5px;top:12px" width="15" height="9" viewBox="0 0 15 9"><path d="M1 1l6.5 6.5L14 1" fill="none" stroke="#a9acae" stroke-width="1.45"/></svg></div><div class="cb" style="left:863px;top:841px"><svg style="left:10.4px;top:4.4px" width="24" height="24" viewBox="0 0 24 24"><circle cx="12" cy="12" r="9.800" fill="none" stroke="#7e8183" stroke-width="1.600"/><text x="12" y="18.400" text-anchor="middle" font-family="Liberation Sans, sans-serif" font-weight="bold" font-size="18.500" stroke="#85888a" stroke-width="0.5" fill="#85888a">?</text></svg><div class="a x" style="left:39.9px;top:1.5px;letter-spacing:0.56px;">Confirm</div><svg style="left:150.5px;top:12px" width="15" height="9" viewBox="0 0 15 9"><path d="M1 1l6.5 6.5L14 1" fill="none" stroke="#a9acae" stroke-width="1.45"/></svg></div>
</div></div>
<div class="a" style="left:1292px;top:58px;width:15px;height:810px;background:#3f4244"></div><div class="a" style="left:1292px;top:58px;width:15px;height:540px;background:#595e61"></div>
<!-- buttons -->
<div class="btn" style="left:7px;width:124px"><div class="a bt" style="left:22.9px;top:2px;letter-spacing:-0.22px;">Defaults...</div></div><div class="btn" style="left:912px;width:126px"><div class="a bt" style="left:48.9px;top:2px;letter-spacing:0.30px;">OK</div></div><div class="btn" style="left:1048px;width:124px"><div class="a bt" style="left:37.9px;top:2px;letter-spacing:0.95px;">Apply</div></div><div class="btn" style="left:1182px;width:125px"><div class="a bt" style="left:35.9px;top:2px;letter-spacing:-0.35px;transform:scaleX(0.9728);transform-origin:0 0;">Cancel</div></div>
</body></html>
